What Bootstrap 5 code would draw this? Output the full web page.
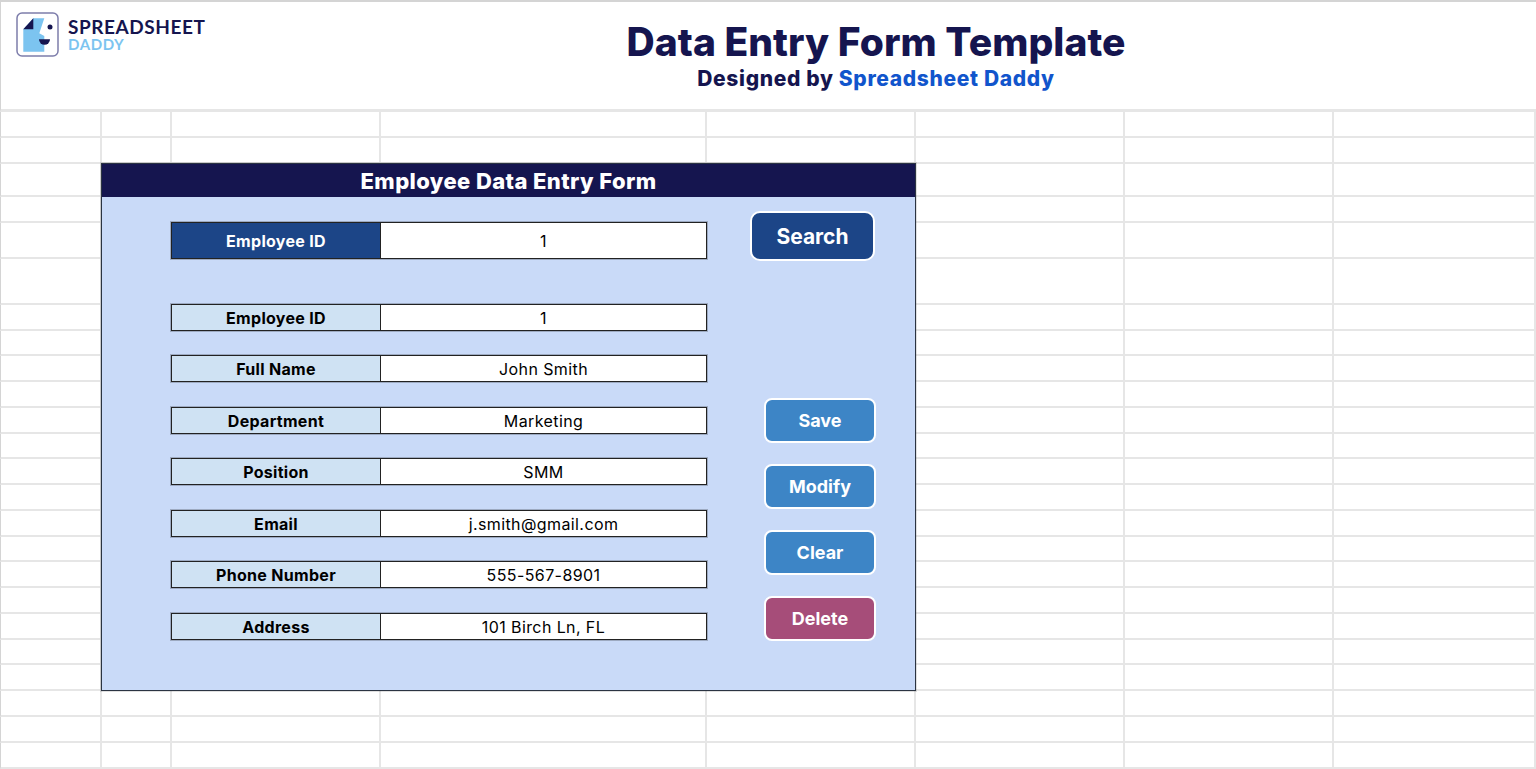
<!DOCTYPE html>
<html lang="en">
  <head>
    <meta charset="UTF-8" />
    <meta name="viewport" content="width=device-width, initial-scale=1.0" />
    <title>Data Entry Form Template</title>
    <link
      href="https://cdn.jsdelivr.net/npm/bootstrap@5.3.0/dist/css/bootstrap.min.css"
      rel="stylesheet"
    />
    <style>
      html,
      body {
        height: 769px;
        overflow: hidden;
        background: #fff;
      }
      body {
        font-family: Inter, "Liberation Sans", sans-serif;
        color: #000;
      }
      .page-head {
        height: 112px;
        padding-left: 215px;
        border-top: 2px solid #d4d4d4;
        border-left: 1px solid #d4d4d4;
        border-bottom: 3px solid #e6e6e6;
      }
      .logo-box {
        left: 15px;
        top: 10px;
      }
      .logo-words {
        padding: 5px 0 0 1px;
      }
      .logo-top {
        font-family: Lato, sans-serif;
        font-size: 19px;
        font-weight: 700;
        line-height: 20px;
        letter-spacing: 0.55px;
        color: #15154f;
      }
      .logo-bottom {
        font-family: Lato, sans-serif;
        font-size: 15px;
        font-weight: 700;
        line-height: 15px;
        letter-spacing: 0.6px;
        color: #7cc4f0;
      }
      .head-title {
        font-size: 39px;
        font-weight: 800;
        line-height: 44px;
        letter-spacing: 0.05px;
        color: #15154f;
        margin: 0;
        padding-top: 18px;
      }
      .head-sub {
        font-size: 21px;
        font-weight: 800;
        line-height: 26px;
        letter-spacing: 0.65px;
        color: #15154f;
        margin: 2px 0 0;
      }
      .head-sub span {
        color: #1155cc;
      }
      /* spreadsheet tracks: the panel sits on the same grid as the cells */
      .sheet-grid {
        display: grid;
        grid-template-columns: 102px 70px 209px 326px 209px 209px 209px 202px;
        grid-template-rows: 26px 26px 33px 26px 36px 46px 26px 25px 26px 26px 26px 25px 26px 26px 26px 25px 26px 26px 26px 25px 26px 26px 26px 26px;
      }
      .sheet-cell {
        border-right: 2px solid #e6e6e6;
        border-bottom: 2px solid #e6e6e6;
      }
      .sheet-cell.first-col {
        border-left: 1px solid #d4d4d4;
      }
      .form-panel {
        grid-column: 2 / 6;
        grid-row: 3 / 22;
        z-index: 1;
        margin: -1px 0 0 -1px;
        background: #c9daf8;
        border: 1px solid #2b3442;
        box-shadow: 0 0 0 1px rgba(0, 0, 0, 0.12);
      }
      .panel-title {
        height: 33px;
        background: #15154f;
        color: #fff;
        font-size: 22px;
        font-weight: 800;
        line-height: 35px;
        letter-spacing: 0.4px;
        flex-shrink: 0;
      }
      .panel-body {
        padding: 25px 39px 0 69px;
      }
      .field-list {
        width: 536px;
      }
      .field-row {
        height: 27px;
        border: 1px solid #222;
        box-shadow: 0 0 0 1px rgba(0, 0, 0, 0.22);
        margin-bottom: 24.45px;
      }
      .field-row.search-row {
        height: 37px;
        margin-bottom: 45px;
      }
      .field-label {
        width: 209px;
        padding-top: 1px;
        background: #cfe2f3;
        border-right: 1px solid #222;
        font-size: 16px;
        font-weight: 700;
        letter-spacing: 0.3px;
      }
      .search-row .field-label {
        background: #1c4587;
        color: #fff;
      }
      .field-value {
        padding-top: 1px;
        background: #fff;
        font-size: 16px;
        letter-spacing: 0.4px;
      }
      .side-buttons {
        width: 125px;
        margin-left: auto;
        margin-right: 1px;
      }
      .sheet-btn {
        width: 112px;
        height: 45px;
        padding: 0;
        margin-bottom: 21px;
        margin-left: 14px;
        border: 2px solid #fff;
        border-radius: 8px;
        background: #3d85c6;
        color: #fff;
        font-size: 18px;
        font-weight: 700;
      }
      .sheet-btn:hover {
        background: #3d85c6;
        color: #fff;
        border-color: #fff;
      }
      .sheet-btn.search-btn {
        width: 125px;
        height: 50px;
        margin-left: 0;
        margin-top: -11px;
        margin-bottom: 137px;
        padding-top: 1px;
        background: #1c4587;
        font-size: 21px;
        border-radius: 10px;
      }
      .sheet-btn.delete-btn {
        background: #a64d79;
      }
    </style>
  </head>
  <body>
    <header class="page-head position-relative text-center">
      <div class="logo-box position-absolute d-flex align-items-start gap-2">
        <svg width="43" height="45" viewBox="0 0 43 45">
          <rect x="1" y="1" width="41" height="43" rx="5" fill="#fff" stroke="#7d7dab" stroke-width="1.5" />
          <path d="M17.3 6.3 L28.3 6.3 L23.3 21.3 L28.3 24 L28.3 39.7 L7.3 39.7 L7.3 17.3 Z" fill="#7cc4f0" />
          <path d="M17.3 6.3 L17.3 17.3 L7.3 17.3 Z" fill="#15154f" />
          <circle cx="34" cy="15" r="2.5" fill="#15154f" />
          <path d="M23 27.3 L34 27.3 A5.5 5.5 0 0 1 23 27.3 Z" fill="#15154f" />
        </svg>
        <div class="logo-words text-start">
          <div class="logo-top">SPREADSHEET</div>
          <div class="logo-bottom">DADDY</div>
        </div>
      </div>
      <h1 class="head-title">Data Entry Form Template</h1>
      <p class="head-sub">Designed by <span>Spreadsheet Daddy</span></p>
    </header>

    <main class="sheet-grid" id="sheetGrid">
      <section class="form-panel d-flex flex-column">
        <div class="panel-title text-center">Employee Data Entry Form</div>
        <div class="panel-body d-flex">
          <div class="field-list" id="fieldList">
            <div class="field-row search-row d-flex">
              <div class="field-label d-flex align-items-center justify-content-center">Employee ID</div>
              <div class="field-value flex-grow-1 d-flex align-items-center justify-content-center">1</div>
            </div>
          </div>
          <div class="side-buttons d-flex flex-column align-items-start">
            <button type="button" class="btn sheet-btn search-btn">Search</button>
            <button type="button" class="btn sheet-btn">Save</button>
            <button type="button" class="btn sheet-btn">Modify</button>
            <button type="button" class="btn sheet-btn">Clear</button>
            <button type="button" class="btn sheet-btn delete-btn">Delete</button>
          </div>
        </div>
      </section>
    </main>

    <script>
      // Form rows
      const fields = [
        ["Employee ID", "1"],
        ["Full Name", "John Smith"],
        ["Department", "Marketing"],
        ["Position", "SMM"],
        ["Email", "j.smith@gmail.com"],
        ["Phone Number", "555-567-8901"],
        ["Address", "101 Birch Ln, FL"],
      ];
      const fieldList = document.getElementById("fieldList");
      fields.forEach(([label, value]) => {
        const row = document.createElement("div");
        row.className = "field-row d-flex";
        row.innerHTML = `
          <div class="field-label d-flex align-items-center justify-content-center">${label}</div>
          <div class="field-value flex-grow-1 d-flex align-items-center justify-content-center">${value}</div>
        `;
        fieldList.appendChild(row);
      });

      // Empty spreadsheet cells behind the panel
      const sheetGrid = document.getElementById("sheetGrid");
      for (let r = 1; r <= 24; r++) {
        for (let c = 1; c <= 8; c++) {
          const cell = document.createElement("div");
          cell.className = c === 1 ? "sheet-cell first-col" : "sheet-cell";
          cell.style.gridRow = r;
          cell.style.gridColumn = c;
          sheetGrid.appendChild(cell);
        }
      }
    </script>
    <script src="https://cdn.jsdelivr.net/npm/bootstrap@5.3.0/dist/js/bootstrap.bundle.min.js"></script>
  </body>
</html>
